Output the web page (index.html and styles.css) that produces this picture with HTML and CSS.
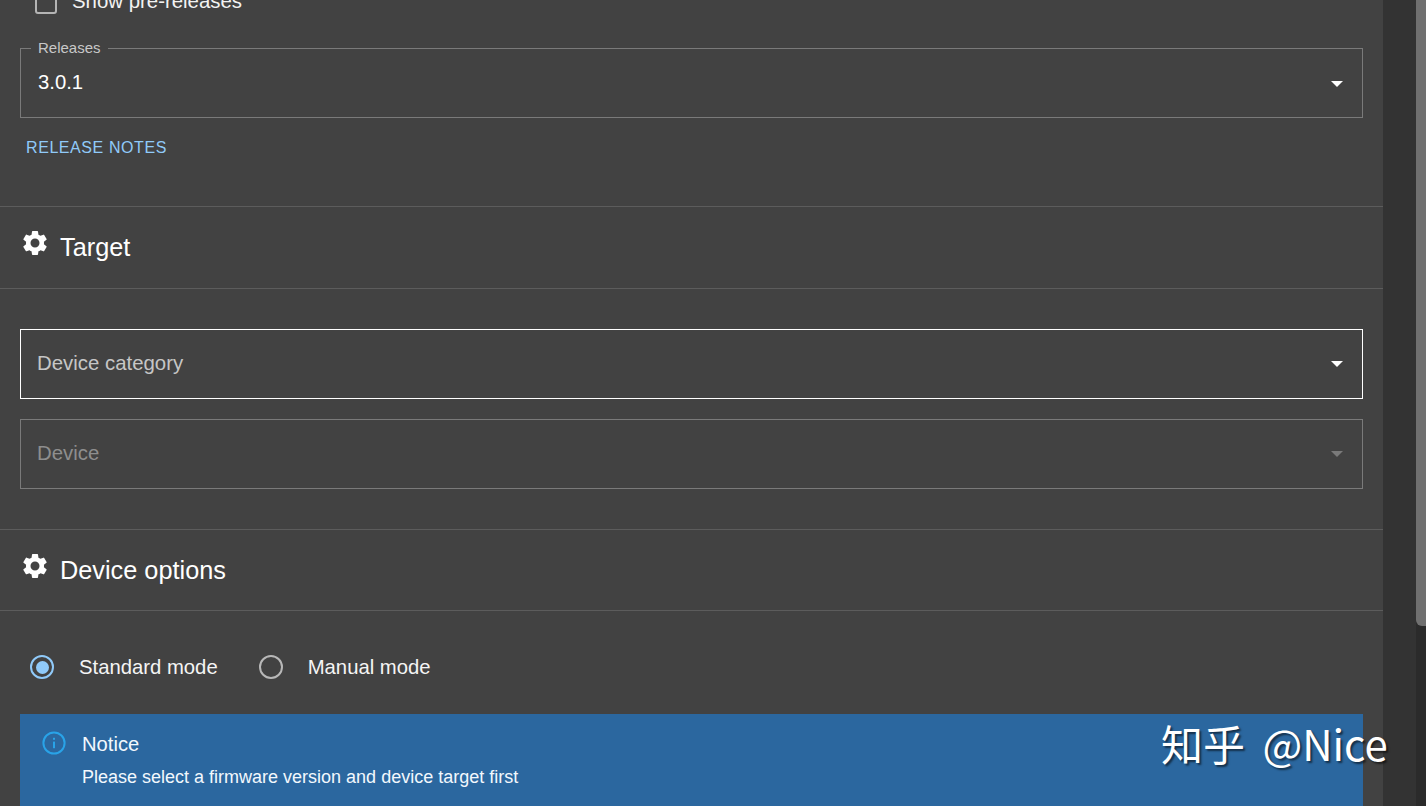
FILE: index.html
```html
<!DOCTYPE html>
<html lang="en">
<head>
<meta charset="utf-8">
<title>Firmware options</title>
<link rel="stylesheet" href="styles.css">
</head>
<body>
<div class="app">
  <main class="panel">
    <section class="versions">
      <label class="check-row"><span class="checkbox"></span><span class="check-label">Show pre-releases</span></label>
      <fieldset class="field releases">
        <legend class="legend">Releases</legend>
        <span class="value">3.0.1</span>
        <svg class="caret" viewBox="0 0 12 6"><path d="M0 0h12L6 6z"/></svg>
      </fieldset>
      <a class="notes" href="#">RELEASE NOTES</a>
    </section>
    <header class="section-head first">
      <svg class="gear" viewBox="0 0 24 24"><path d="M19.14 12.94c.04-.3.06-.61.06-.94 0-.32-.02-.64-.07-.94l2.03-1.58a.49.49 0 0 0 .12-.61l-1.92-3.32a.49.49 0 0 0-.59-.22l-2.39.96c-.5-.38-1.03-.7-1.62-.94l-.36-2.54a.48.48 0 0 0-.48-.41h-3.84c-.24 0-.43.17-.47.41l-.36 2.54c-.59.24-1.13.57-1.62.94l-2.39-.96c-.22-.08-.47 0-.59.22L2.74 8.87c-.12.21-.08.47.12.61l2.03 1.58c-.05.3-.09.63-.09.94s.02.64.07.94l-2.03 1.58a.49.49 0 0 0-.12.61l1.92 3.32c.12.22.37.29.59.22l2.39-.96c.5.38 1.03.7 1.62.94l.36 2.54c.05.24.24.41.48.41h3.84c.24 0 .44-.17.47-.41l.36-2.54c.59-.24 1.13-.56 1.62-.94l2.39.96c.22.08.47 0 .59-.22l1.92-3.32c.12-.22.07-.47-.12-.61l-2.01-1.58zM12 15.6A3.6 3.6 0 1 1 12 8.4a3.6 3.6 0 0 1 0 7.2z"/></svg>
      <h2 class="section-title">Target</h2>
    </header>
    <section class="selects">
      <div class="field select focused">
        <span class="placeholder">Device category</span>
        <svg class="caret" viewBox="0 0 12 6"><path d="M0 0h12L6 6z"/></svg>
      </div>
      <div class="field select disabled">
        <span class="placeholder">Device</span>
        <svg class="caret" viewBox="0 0 12 6"><path d="M0 0h12L6 6z"/></svg>
      </div>
    </section>
    <header class="section-head">
      <svg class="gear" viewBox="0 0 24 24"><path d="M19.14 12.94c.04-.3.06-.61.06-.94 0-.32-.02-.64-.07-.94l2.03-1.58a.49.49 0 0 0 .12-.61l-1.92-3.32a.49.49 0 0 0-.59-.22l-2.39.96c-.5-.38-1.03-.7-1.62-.94l-.36-2.54a.48.48 0 0 0-.48-.41h-3.84c-.24 0-.43.17-.47.41l-.36 2.54c-.59.24-1.13.57-1.62.94l-2.39-.96c-.22-.08-.47 0-.59.22L2.74 8.87c-.12.21-.08.47.12.61l2.03 1.58c-.05.3-.09.63-.09.94s.02.64.07.94l-2.03 1.58a.49.49 0 0 0-.12.61l1.92 3.32c.12.22.37.29.59.22l2.39-.96c.5.38 1.03.7 1.62.94l.36 2.54c.05.24.24.41.48.41h3.84c.24 0 .44-.17.47-.41l.36-2.54c.59-.24 1.13-.56 1.62-.94l2.39.96c.22.08.47 0 .59-.22l1.92-3.32c.12-.22.07-.47-.12-.61l-2.01-1.58zM12 15.6A3.6 3.6 0 1 1 12 8.4a3.6 3.6 0 0 1 0 7.2z"/></svg>
      <h2 class="section-title">Device options</h2>
    </header>
    <section class="options">
      <div class="radios">
        <label class="radio-row"><span class="radio checked"></span><span class="radio-label">Standard mode</span></label>
        <label class="radio-row"><span class="radio"></span><span class="radio-label">Manual mode</span></label>
      </div>
      <div class="notice">
        <svg class="info" viewBox="0 0 24 24"><circle cx="12" cy="12" r="10.6" fill="none" stroke="currentColor" stroke-width="2"/><rect x="11" y="10.6" width="2" height="6.6" fill="currentColor"/><rect x="11" y="6.8" width="2" height="2" fill="currentColor"/></svg>
        <div class="notice-body">
          <div class="notice-title">Notice</div>
          <div class="notice-text">Please select a firmware version and device target first</div>
        </div>
      </div>
    </section>
  </main>
  <aside class="gutter"></aside>
  <div class="scrollbar"><div class="thumb"></div></div>
</div>
<div class="watermark">知乎 @Nice</div>
</body>
</html>
```

FILE: styles.css
```css
* { box-sizing: border-box; }
html, body { margin: 0; height: 100%; overflow: hidden; background: #424242; }
body { font-family: "Liberation Sans", Arial, sans-serif; color: #fff; }
.app { display: flex; height: 806px; overflow: hidden; }
.panel { width: 1383px; flex: none; background: #424242; }
.gutter { width: 33px; flex: none; background: #333; }
.scrollbar { width: 10px; flex: none; background: #2b2b2b; }
.thumb { height: 626px; background: #707070; border-radius: 0 0 0 6px; }

.versions { height: 216px; padding: 0 20px; border-bottom: 1px solid #5c5c5c; }
.check-row { display: flex; align-items: center; height: 24px; margin-top: -9px; padding-left: 15px; }
.checkbox { width: 22px; height: 22px; border: 2px solid #b4b4b4; border-radius: 3px; flex: none; }
.check-label { margin-left: 15px; font-size: 20.4px; margin-top: -3px; color: #f2f2f2; }

.field { position: relative; display: flex; align-items: center; height: 70px; margin: 0; padding: 0 16px; border: 1px solid #7a7a7a; min-width: 0; }
.releases { display: block; height: 77px; margin-top: 26px; padding: 0 17px; }
.legend { font-size: 15px; line-height: 14px; color: #c8c8c8; padding: 0 7px; margin-left: -7px; height: 14px; }
.value { display: block; font-size: 20.3px; line-height: 24px; margin-top: 15px; }
.caret { position: absolute; right: 19px; top: 50%; width: 12px; height: 6px; margin-top: -3px; fill: #fff; }
.releases .caret { top: 26px; margin-top: 0; }
.notes { display: block; margin: 19px 0 0 6px; font-size: 16px; line-height: 22px; letter-spacing: .58px; color: #90caf9; text-decoration: none; }

.section-head { display: flex; height: 81px; padding: 21px 0 0 20px; border-bottom: 1px solid #5c5c5c; }
.section-head.first { height: 82px; }
.gear { width: 30px; height: 30px; fill: #fff; flex: none; }
.section-title { margin: 4px 0 0 10px; font-size: 25.3px; line-height: 30px; font-weight: 400; }

.selects { display: flex; flex-direction: column; gap: 20px; height: 241px; padding: 40px 20px 0; border-bottom: 1px solid #5c5c5c; }
.placeholder { font-size: 20.4px; margin-top: -2px; color: #c6c6c6; }
.focused { border-color: #fff; }
.disabled .placeholder { color: #8e8e8e; }
.disabled .caret { fill: #7a7a7a; }

.options { padding: 0 20px; }
.radios { display: flex; height: 103px; align-items: center; gap: 41px; padding: 9px 0 0 10px; }
.radio-row { display: flex; align-items: center; }
.radio { position: relative; width: 24px; height: 24px; border: 2px solid #b8b8b8; border-radius: 50%; flex: none; }
.radio.checked { border-color: #90caf9; }
.radio.checked::after { content: ""; position: absolute; left: 3.5px; top: 3.5px; width: 13px; height: 13px; border-radius: 50%; background: #90caf9; }
.radio-label { margin-left: 25px; font-size: 20.3px; color: #f5f5f5; }

.notice { display: flex; height: 110px; background: #2b679f; padding: 17px 22px; }
.info { width: 24px; height: 24px; color: #29a3e8; flex: none; margin-right: 16px; }
.notice-title { font-size: 20.2px; line-height: 26px; color: #f2f8fd; }
.notice-text { margin-top: 9px; font-size: 18px; line-height: 22px; color: #f2f8fd; }

.watermark { position: absolute; left: 1161px; top: 716px; font-family: "Noto Sans CJK SC", sans-serif; font-size: 42px; line-height: 54px; word-spacing: 8px; color: #fff; white-space: nowrap; text-shadow: 2px 2px 2px rgba(0,0,0,.55); }
```
